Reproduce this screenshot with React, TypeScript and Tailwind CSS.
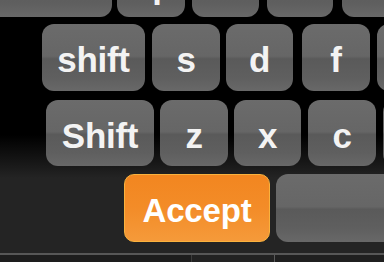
import React from 'react';

const keyBase =
  'shrink-0 h-full rounded-[12px] flex items-center justify-center pt-[4px] text-[#f3f3f3] font-bold text-[35px] leading-none tracking-[-0.3px] bg-[linear-gradient(to_bottom,#6b6b6b_0%,#666666_48%,#5a5a5a_52%,#5f5f5f_80%,#686868_100%)]';

const Key: React.FC<{ label?: string; className: string }> = ({ label, className }) => (
  <div className={`${keyBase} ${className}`}>{label}</div>
);

export default function App() {
  return (
    <div
      className="w-[384px] h-[262px] overflow-hidden flex flex-col bg-[linear-gradient(to_bottom,#000_0px,#000_135px,#242424_178px,#242424_100%)]"
      style={{ fontFamily: '"Liberation Sans", Arial, sans-serif' }}
    >
      <div className="flex flex-col -mt-[50px]">
        {/* row 1, mostly cut off */}
        <div className="flex h-[67px]">
          <Key className="w-[142px] -ml-[30px]" />
          <Key label="q" className="w-[68px] ml-[5px]" />
          <Key className="w-[67px] ml-[7px]" />
          <Key className="w-[66px] ml-[8px]" />
          <Key className="w-[67px] ml-[9px]" />
        </div>

        {/* row 2 */}
        <div className="flex h-[67px] mt-[7px]">
          <Key label="shift" className="w-[103px] ml-[42px]" />
          <Key label="s" className="w-[68px] ml-[7px]" />
          <Key label="d" className="w-[67px] ml-[6px]" />
          <Key label="f" className="w-[68px] ml-[9px]" />
          <Key className="w-[68px] ml-[7px]" />
        </div>

        {/* row 3 */}
        <div className="flex h-[66px] mt-[9px]">
          <Key label="Shift" className="w-[108px] ml-[46px]" />
          <Key label="z" className="w-[68px] ml-[6px]" />
          <Key label="x" className="w-[67px] ml-[6px]" />
          <Key label="c" className="w-[68px] ml-[7px]" />
          <Key className="w-[68px] ml-[7px]" />
        </div>

        {/* row 4 */}
        <div className="flex h-[68px] mt-[8px]">
          <div className="shrink-0 w-[146px] ml-[124px] h-full rounded-[10px] border border-[#f9b23e] flex items-center justify-center pt-[5px] text-white font-bold text-[33px] leading-none tracking-[-0.2px] bg-[linear-gradient(to_bottom,#f28620_0%,#f38c28_50%,#f59a3a_100%)]">
            Accept
          </div>
          <Key className="w-[160px] ml-[6px]" />
        </div>
      </div>

      {/* bottom strip */}
      <div className="mt-[11px] h-[2px] bg-[#575757]" />
      <div className="flex flex-1">
        <div className="w-[192px] bg-[#1d1d1d] border-r border-[#3c3c3c]" />
        <div className="w-[83px] bg-[#222222] border-r border-[#5a5a5a]" />
        <div className="flex-1 bg-[#1f1f1f]" />
      </div>
    </div>
  );
}
